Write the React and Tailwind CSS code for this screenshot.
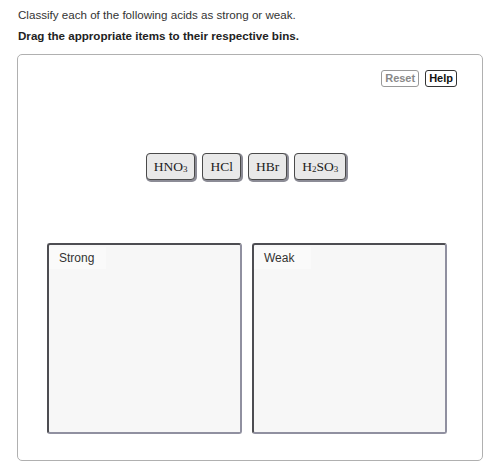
import React from 'react';

const Chip = ({ children }) => (
    <div className="h-[27px] px-[7px] flex items-center rounded-[4px] border border-[#4a4a4a] bg-[#e9e9e9] shadow-[1px_1px_0_1px_#8c8c96] text-[13.5px] text-[#222] font-['Liberation_Serif',serif] leading-none">
        {children}
    </div>
);

const Sub = ({ children }) => (
    <sub className="text-[9px] relative top-[2px] align-baseline">{children}</sub>
);

const Bin = ({ label }) => (
    <div className="w-[195px] h-[191px] rounded-[3px] border-2 border-t-[#4d4d52] border-l-[#4d4d52] border-r-[#9090a0] border-b-[#9090a0] bg-[#f7f7f7]">
        <div className="inline-block bg-[#fafafa] pl-[10px] pr-[9px] pt-[4px] pb-[4px] text-[12px] leading-[14px] text-[#333] w-[57px]">
            {label}
        </div>
    </div>
);

export default function App() {
    return (
        <div className="w-[496px] h-[468px] bg-white font-['Liberation_Sans',Arial,sans-serif] text-[#333]">
            <div className="pl-[18px] pt-[8px]">
                <p className="text-[11.6px] leading-[14px]">Classify each of the following acids as strong or weak.</p>
                <p className="mt-[7px] text-[11.6px] leading-[14px] font-bold text-[#222]">Drag the appropriate items to their respective bins.</p>
            </div>

            <div className="ml-[17px] mt-[11px] w-[466px] h-[407px] border border-[#b0b0b0] rounded-[5px] flex flex-col">
                {/* toolbar */}
                <div className="flex justify-end gap-[6px] pr-[25px] pt-[15px]">
                    <button className="h-[17px] px-[3px] rounded-[3px] border border-[#999] text-[11px] leading-none font-bold text-[#888]">Reset</button>
                    <button className="h-[17px] px-[3px] rounded-[3px] border border-[#333] text-[11px] leading-none font-bold text-[#111]">Help</button>
                </div>

                {/* draggable items */}
                <div className="flex justify-center gap-[7px] mt-[66px] pr-[8px]">
                    <Chip>HNO<Sub>3</Sub></Chip>
                    <Chip>HCl</Chip>
                    <Chip>HBr</Chip>
                    <Chip>H<Sub>2</Sub>SO<Sub>3</Sub></Chip>
                </div>

                {/* bins */}
                <div className="flex gap-[10px] pl-[29px] mt-[63px]">
                    <Bin label="Strong" />
                    <Bin label="Weak" />
                </div>
            </div>
        </div>
    );
}
